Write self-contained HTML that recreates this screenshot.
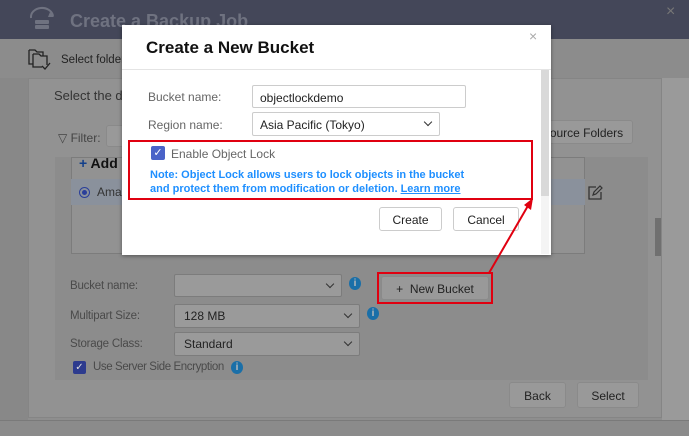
<!DOCTYPE html>
<html><head><style>
*{box-sizing:border-box;margin:0;padding:0}
body{width:689px;height:436px;overflow:hidden;background:#8e8e8e;font-family:"Liberation Sans",sans-serif;position:relative;font-size:12px;color:#333}
.a{position:absolute}
.sel{position:absolute;background:#9a9a9a;border:1px solid #7c7c7c;border-radius:2px;color:#222;padding:4px 0 0 9px;font-size:12px}
.chev{position:absolute;right:8px;top:6px;width:6px;height:6px;border-right:1.5px solid #333;border-bottom:1.5px solid #333;transform:rotate(45deg)}
.info{position:absolute;width:12px;height:13px;border-radius:50%;background:#1a6fa8;color:#bbb;font-size:10px;font-weight:bold;text-align:center;line-height:13px}
.btn{position:absolute;border:1px solid #8a8a8a;border-radius:3px;background:#999;text-align:center;font-size:12px;color:#222}
.lbl{position:absolute;color:#4a4a4a;font-size:11.5px;letter-spacing:-.2px}
</style></head><body>
<div class="a" style="left:0;top:0;width:689px;height:39px;background:#444759"></div>
<div class="a" style="left:0;top:39px;width:689px;height:39px;background:#8c8c8c"></div>
<svg class="a" style="left:26px;top:6px" width="34" height="28"><path d="M5 12 A11 9 0 0 1 27 10" fill="none" stroke="#6f7280" stroke-width="2"/><path d="M24 6 L28 11 L22 11" fill="#6f7280"/><rect x="9" y="14" width="14" height="4" rx="1" fill="#6f7280"/><rect x="9" y="19" width="14" height="4" rx="1" fill="#6f7280"/></svg>
<div class="a" style="left:70px;top:11px;font-size:18px;font-weight:bold;color:#6f7280">Create a Backup Job</div>
<div class="a" style="left:666px;top:3px;font-size:16px;color:#777">×</div>
<svg class="a" style="left:27px;top:47px" width="26" height="24"><path d="M2 3h6l2 2h6v4 M2 3v14h4 M6 7h6l2 2h6v9 M6 7v13h9" fill="none" stroke="#222" stroke-width="1.3"/><path d="M15 19l3 3 5-6" fill="none" stroke="#222" stroke-width="1.3"/></svg>
<div class="a" style="left:61px;top:54px;font-size:11.5px;color:#222">Select folder</div>
<div class="a" style="left:0;top:78px;width:28px;height:342px;background:#888"></div>
<div class="a" style="left:28px;top:78px;width:634px;height:340px;background:#929292;border:1px solid #858585"></div>
<div class="a" style="left:662px;top:78px;width:27px;height:342px;background:#9a9a9a"></div>
<div class="a" style="left:0;top:420px;width:689px;height:16px;background:#8b8b8b;border-top:1px solid #7a7a7a"></div>
<div class="a" style="left:54px;top:88px;font-size:13px;color:#333">Select the de</div>
<div class="a" style="left:58px;top:131px;font-size:12px;color:#444">▽ Filter:</div>
<div class="btn" style="left:106px;top:125px;width:30px;height:22px;"></div>
<div class="btn" style="left:540px;top:120px;width:93px;height:24px;padding-top:5px">ource Folders</div>
<div class="a" style="left:55px;top:157px;width:593px;height:223px;background:#8c8c8c"></div>
<div class="a" style="left:71px;top:157px;width:514px;height:97px;border:1px solid #7c7c7c;background:#929292"></div>
<div class="a" style="left:71px;top:179px;width:514px;height:26px;background:#8a919c"></div>
<div class="a" style="left:79px;top:155px;font-size:14px;font-weight:bold;color:#111"><span style="color:#123f8a">+</span> Add</div>
<div class="a" style="left:79px;top:187px;width:11px;height:11px;border:1.5px solid #2a3f9a;border-radius:50%"><div style="width:5px;height:5px;margin:1.5px;background:#2a3f9a;border-radius:50%"></div></div>
<div class="a" style="left:97px;top:185px;color:#333">Amaz</div>
<svg class="a" style="left:587px;top:184px" width="17" height="17"><path d="M9 3H2v12h12V8" fill="none" stroke="#333" stroke-width="1.3"/><path d="M6 11l1-3 6-6 2 2-6 6z" fill="none" stroke="#333" stroke-width="1.2"/></svg>
<div class="a" style="left:655px;top:218px;width:6px;height:38px;background:#707070"></div>

<div class="lbl" style="left:70px;top:280px">Bucket name:</div>
<div class="sel" style="left:174px;top:274px;width:168px;height:23px"><span class="chev"></span></div>
<div class="info" style="left:349px;top:277px">i</div>
<div class="a" style="left:377px;top:272px;width:116px;height:32px;border:2px solid #e00010"></div>
<div class="btn" style="left:381px;top:276px;width:108px;height:24px;padding-top:5px">+&nbsp; New Bucket</div>
<div class="lbl" style="left:70px;top:310px">Multipart Size:</div>
<div class="sel" style="left:174px;top:304px;width:186px;height:24px">128 MB<span class="chev"></span></div>
<div class="info" style="left:367px;top:307px">i</div>
<div class="lbl" style="left:70px;top:338px">Storage Class:</div>
<div class="sel" style="left:174px;top:332px;width:186px;height:24px">Standard<span class="chev"></span></div>
<div class="a" style="left:73px;top:361px;width:13px;height:13px;background:#2d3b8e;border-radius:2px;color:#ddd;font-size:10px;text-align:center;line-height:13px">✓</div>
<div class="lbl" style="left:93px;top:361px;letter-spacing:-.4px">Use Server Side Encryption</div>
<div class="info" style="left:231px;top:361px">i</div>
<div class="btn" style="left:509px;top:382px;width:57px;height:26px;padding-top:6px">Back</div>
<div class="btn" style="left:577px;top:382px;width:62px;height:26px;padding-top:6px">Select</div>

<div class="a" style="left:122px;top:25px;width:429px;height:230px;background:#fff;box-shadow:0 1px 4px rgba(0,0,0,.4)"></div>
<div class="a" style="left:146px;top:38px;font-size:17px;font-weight:bold;color:#111">Create a New Bucket</div>
<div class="a" style="left:529px;top:28px;font-size:14px;color:#aaa">×</div>
<div class="a" style="left:122px;top:69px;width:429px;height:1px;background:#e4e4e4"></div>
<div class="a" style="left:541px;top:70px;width:8px;height:126px;background:#d9d9d9"></div>
<div class="a" style="left:541px;top:196px;width:8px;height:58px;background:#f4f4f4"></div>
<div class="a" style="left:148px;top:90px;color:#666;font-size:12px">Bucket name:</div>
<div class="a" style="left:252px;top:85px;width:214px;height:23px;border:1px solid #ccc;border-radius:2px;padding:5px 0 0 7px;color:#222">objectlockdemo</div>
<div class="a" style="left:148px;top:118px;color:#666;font-size:12px">Region name:</div>
<div class="a" style="left:252px;top:112px;width:188px;height:24px;border:1px solid #ccc;border-radius:2px;padding:5px 0 0 7px;color:#222">Asia Pacific (Tokyo)<span class="chev"></span></div>
<div class="a" style="left:128px;top:140px;width:405px;height:60px;border:2px solid #e00010"></div>
<div class="a" style="left:151px;top:146px;width:14px;height:14px;background:#4a63c8;border-radius:2px;color:#fff;font-size:11px;text-align:center;line-height:14px">✓</div>
<div class="a" style="left:171px;top:147px;color:#666">Enable Object Lock</div>
<div class="a" style="left:150px;top:168px;font-size:11px;font-weight:bold;color:#1e8fff;line-height:14px">Note: Object Lock allows users to lock objects in the bucket<br>and protect them from modification or deletion. <u>Learn more</u></div>
<div class="btn" style="left:379px;top:207px;width:63px;height:24px;background:#fff;border-color:#ccc;padding-top:5px">Create</div>
<div class="btn" style="left:453px;top:207px;width:66px;height:24px;background:#fff;border-color:#ccc;padding-top:5px">Cancel</div>
<svg class="a" style="left:0;top:0" width="689" height="436"><line x1="489" y1="273" x2="529" y2="204" stroke="#e00010" stroke-width="2"/><polygon points="533,198 531,210 524,205" fill="#e00010"/></svg>
</body></html>
